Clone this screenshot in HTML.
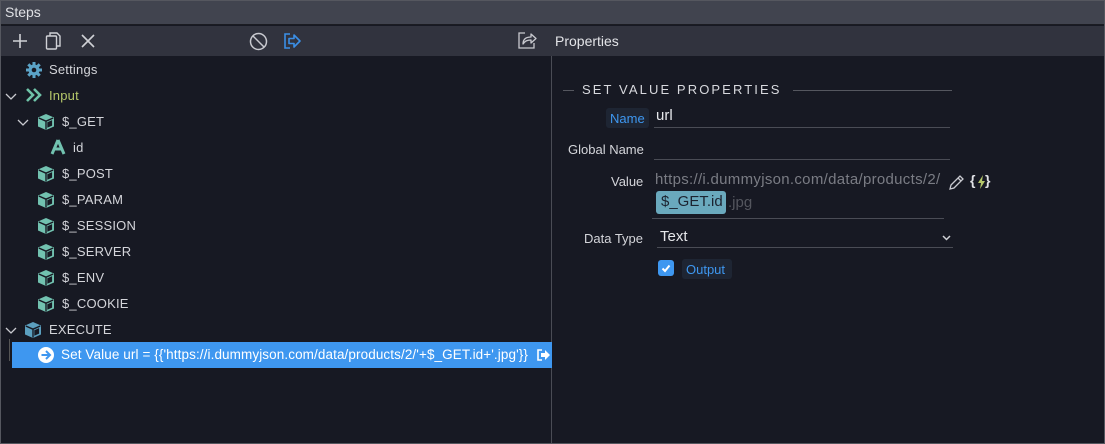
<!DOCTYPE html>
<html><head><style>
*{margin:0;padding:0;box-sizing:border-box}
body{width:1105px;height:444px;background:#171923;font-family:"Liberation Sans",sans-serif;font-size:13px;color:#d8d9de;position:relative;overflow:hidden}
.frame{position:absolute;inset:0;border:1px solid #55575f;pointer-events:none}
.hdr{position:absolute;left:0;top:0;width:1105px;height:25px;background:#41444f;border-bottom:1px solid #1b1c22}
.hdr span{position:absolute;left:5px;top:4px;font-size:14px;color:#e0e1e5}
.tb{position:absolute;left:0;top:26px;width:1105px;height:30px;background:#31333e}
.a{position:absolute;white-space:nowrap}
.div{position:absolute;left:551px;top:56px;width:1px;height:388px;background:#4a4c55}
.cube{position:absolute;width:18px;height:18px}
.chev{position:absolute;width:12px;height:12px}
.lbl{color:#d4d5da;font-size:13px;letter-spacing:0.2px}
.line{position:absolute;height:1px;background:#4a4c55}
</style></head><body>
<div class="hdr"><span>Steps</span></div>
<div class="tb">
 <svg class="a" style="left:12px;top:7px" width="16" height="16" viewBox="0 0 16 16"><path d="M8 1v14M1 8h14" stroke="#d0d1d6" stroke-width="1.6"/></svg>
 <svg class="a" style="left:45px;top:5px" width="18" height="20" viewBox="0 0 18 20"><rect x="1.5" y="5" width="10" height="13" rx="1" fill="none" stroke="#d0d1d6" stroke-width="1.4"/><path d="M5 5V2h7l3 3v10h-3.5" fill="none" stroke="#d0d1d6" stroke-width="1.4"/></svg>
 <svg class="a" style="left:81px;top:8px" width="14" height="14" viewBox="0 0 14 14"><path d="M1 1l12 12M13 1L1 13" stroke="#d0d1d6" stroke-width="1.6"/></svg>
 <svg class="a" style="left:249px;top:6px" width="19" height="19" viewBox="0 0 19 19"><circle cx="9.5" cy="9.5" r="8" fill="none" stroke="#c9cad0" stroke-width="1.5"/><path d="M4 4l11 11" stroke="#c9cad0" stroke-width="1.5"/></svg>
 <svg class="a" style="left:283px;top:6px" width="19" height="18" viewBox="0 0 19 18"><path d="M7 2H2v14h5" fill="none" stroke="#3b8fe6" stroke-width="1.6"/><path d="M6 6.5h5V3l6 6-6 6v-3.5H6z" fill="none" stroke="#3b8fe6" stroke-width="1.6" stroke-linejoin="round"/></svg>
 <svg class="a" style="left:517px;top:5px" width="21" height="19" viewBox="0 0 21 19"><path d="M8 2H2v15h15v-5" fill="none" stroke="#c9cad0" stroke-width="1.3"/><path d="M6 13c0-5 3-7 8-7V3l5 4.5-5 4.5V9c-4 0-6 1-8 4z" fill="none" stroke="#c9cad0" stroke-width="1.3" stroke-linejoin="round"/></svg>
 <span class="a" style="left:555px;top:7px;font-size:14px;color:#e3e4e8">Properties</span>
</div>
<div class="div"></div>

<svg class="a" style="left:25px;top:61px" width="18" height="18" viewBox="0 0 18 18"><circle cx="9" cy="9" r="5.5" fill="#5ba3c7"/><g stroke="#5ba3c7" stroke-width="3"><path d="M9 1v16M1 9h16M3.3 3.3l11.4 11.4M14.7 3.3L3.3 14.7"/></g><circle cx="9" cy="9" r="2.3" fill="#171923"/></svg>
<span class="a lbl" style="left:49px;top:62px">Settings</span>
<svg class="chev" style="left:5px;top:90px" viewBox="0 0 12 12"><path d="M1 4l5 5 5-5" fill="none" stroke="#c9cad0" stroke-width="1.3"/></svg>
<svg class="a" style="left:25px;top:87px" width="18" height="16" viewBox="0 0 18 16"><path d="M2 2l6 6-6 6M9 2l6 6-6 6" fill="none" stroke="#6fc3a8" stroke-width="2.6"/></svg>
<span class="a" style="left:49px;top:88px;color:#b5c76a;letter-spacing:0.2px">Input</span>
<svg class="chev" style="left:17px;top:116px" viewBox="0 0 12 12"><path d="M1 4l5 5 5-5" fill="none" stroke="#c9cad0" stroke-width="1.3"/></svg>

<svg width="0" height="0" style="position:absolute"><defs><symbol id="cb" viewBox="0 0 18 18"><path d="M9 1l8 3.5v9L9 17l-8-3.5v-9z" fill="#72c2b0"/><path d="M1.8 5L9 8.2 16.2 5M9 8.2V16.5" fill="none" stroke="#171923" stroke-width="1.4"/><path d="M10.3 9.2l4.8-2.1v5.5l-4.8 2.2z" fill="#171923"/></symbol><symbol id="cbb" viewBox="0 0 18 18"><path d="M9 1l8 3.5v9L9 17l-8-3.5v-9z" fill="#5b9fbf"/><path d="M1.8 5L9 8.2 16.2 5M9 8.2V16.5" fill="none" stroke="#171923" stroke-width="1.4"/><path d="M10.3 9.2l4.8-2.1v5.5l-4.8 2.2z" fill="#171923"/></symbol></defs></svg>

<svg class="cube" style="left:37px;top:113px"><use href="#cb"/></svg><span class="a lbl" style="left:62px;top:114px">$_GET</span>
<svg class="a" style="left:50px;top:139px" width="16" height="16" viewBox="0 0 16 16"><path d="M8 1L2 15M8 1l6 14M4.3 10h7.4" stroke="#72c2b0" stroke-width="3" fill="none"/></svg>
<span class="a lbl" style="left:73px;top:140px">id</span>
<svg class="cube" style="left:37px;top:165px"><use href="#cb"/></svg><span class="a lbl" style="left:62px;top:166px">$_POST</span>
<svg class="cube" style="left:37px;top:191px"><use href="#cb"/></svg><span class="a lbl" style="left:62px;top:192px">$_PARAM</span>
<svg class="cube" style="left:37px;top:217px"><use href="#cb"/></svg><span class="a lbl" style="left:62px;top:218px">$_SESSION</span>
<svg class="cube" style="left:37px;top:243px"><use href="#cb"/></svg><span class="a lbl" style="left:62px;top:244px">$_SERVER</span>
<svg class="cube" style="left:37px;top:269px"><use href="#cb"/></svg><span class="a lbl" style="left:62px;top:270px">$_ENV</span>
<svg class="cube" style="left:37px;top:295px"><use href="#cb"/></svg><span class="a lbl" style="left:62px;top:296px">$_COOKIE</span>
<svg class="chev" style="left:5px;top:324px" viewBox="0 0 12 12"><path d="M1 4l5 5 5-5" fill="none" stroke="#c9cad0" stroke-width="1.3"/></svg>
<svg class="cube" style="left:24px;top:321px"><use href="#cbb"/></svg><span class="a lbl" style="left:49px;top:322px">EXECUTE</span>
<div class="a" style="left:9px;top:339px;width:1px;height:22px;background:#555"></div>
<div class="a" style="left:12px;top:342px;width:540px;height:26px;background:#3e97f0"></div>
<svg class="a" style="left:37px;top:346px" width="18" height="18" viewBox="0 0 18 18"><circle cx="9" cy="9" r="8" fill="#fff"/><path d="M4.5 9h8M9 5l4 4-4 4" fill="none" stroke="#3e97f0" stroke-width="2"/></svg>
<span class="a" style="left:61px;top:347px;color:#fff;font-size:13.5px;letter-spacing:0.1px">Set Value url = {{'https://i.dummyjson.com/data/products/2/'+$_GET.id+'.jpg'}}</span>
<svg class="a" style="left:537px;top:349px" width="14" height="12" viewBox="0 0 14 12"><path d="M5 1H1v10h4" fill="none" stroke="#fff" stroke-width="1.6"/><path d="M4 4h4V1l5 5-5 5V8H4z" fill="#fff"/></svg>

<div class="line" style="left:563px;top:90px;width:11px;background:#55575f"></div>
<span class="a" style="left:582px;top:82px;font-size:13px;letter-spacing:2.1px;color:#d8d9de">SET VALUE PROPERTIES</span>
<div class="line" style="left:793px;top:90px;width:159px;background:#55575f"></div>

<div class="a" style="left:606px;top:108px;width:43px;height:20px;background:#1e2533;border-radius:3px"></div>
<span class="a" style="left:610px;top:111px;color:#3e97f0">Name</span>
<span class="a" style="left:656px;top:107px;font-size:15px;color:#e6e7eb">url</span>
<div class="line" style="left:654px;top:127px;width:296px"></div>

<span class="a" style="left:568px;top:142px;color:#d4d5da">Global Name</span>
<div class="line" style="left:654px;top:159px;width:296px"></div>

<span class="a" style="left:611px;top:174px;color:#d4d5da">Value</span>
<span class="a" style="left:655px;top:171px;font-size:15px;color:#7a7c84;letter-spacing:0.3px">https://i.dummyjson.com/data/products/2/</span>
<svg class="a" style="left:947px;top:174px" width="18" height="18" viewBox="0 0 18 18"><path d="M3 15l1-4 9-9 3 3-9 9z M11 4l3 3" fill="none" stroke="#c9cad0" stroke-width="1.3"/></svg>
<span class="a" style="left:970px;top:172px;font-size:14px;color:#e0e1e5;font-weight:bold">{</span>
<svg class="a" style="left:977px;top:175px" width="9" height="14" viewBox="0 0 9 14"><path d="M6 0L1 8h3l-1 6 5-8H5z" fill="#b5c76a"/></svg>
<span class="a" style="left:985px;top:172px;font-size:14px;color:#e0e1e5;font-weight:bold">}</span>
<div class="a" style="left:656px;top:191px;width:70px;height:23px;background:#6aa9bd;border-radius:3px"></div>
<span class="a" style="left:661px;top:193px;font-size:15px;color:#1c2330">$_GET.id</span>
<span class="a" style="left:728px;top:194px;font-size:15px;color:#54565e">.jpg</span>
<div class="line" style="left:652px;top:218px;width:292px"></div>

<span class="a" style="left:584px;top:231px;color:#d4d5da">Data Type</span>
<span class="a" style="left:660px;top:228px;font-size:15px;color:#e6e7eb">Text</span>
<svg class="a" style="left:942px;top:235px" width="9" height="6" viewBox="0 0 9 6"><path d="M1 1l3.5 3.5L8 1" fill="none" stroke="#d0d1d6" stroke-width="1.5"/></svg>
<div class="line" style="left:657px;top:247px;width:296px"></div>

<div class="a" style="left:658px;top:260px;width:16px;height:16px;background:#3e97f0;border-radius:3px"></div>
<svg class="a" style="left:660px;top:262px" width="12" height="12" viewBox="0 0 12 12"><path d="M2.5 6.5l2.5 2.5 4.5-5.5" fill="none" stroke="#fff" stroke-width="2"/></svg>
<div class="a" style="left:682px;top:259px;width:50px;height:20px;background:#1e2533;border-radius:3px"></div>
<span class="a" style="left:686px;top:262px;color:#3e97f0">Output</span>
<div class="frame"></div>
</body></html>
